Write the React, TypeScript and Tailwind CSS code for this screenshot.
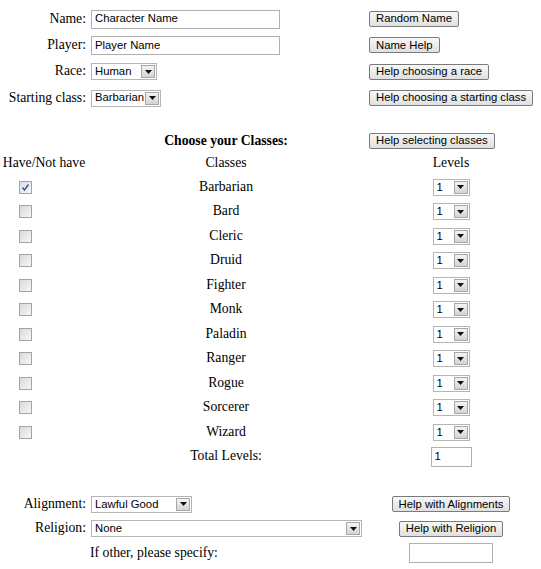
import React from "react";

const serif = "font-['Liberation_Serif','Times_New_Roman',serif] text-[13.7px] text-black";
const sans = "font-['Liberation_Sans',Arial,sans-serif] text-[11.3px] text-black";

function Arrow() {
  return (
    <div className="flex h-[13px] w-[14px] shrink-0 items-center justify-center border border-[#a7a7a7] bg-gradient-to-b from-[#f4f4f4] to-[#d4d4d4] mr-[1px]">
      <svg width="7" height="4" viewBox="0 0 7 4">
        <path d="M0 0 L7 0 L3.5 4 Z" fill="#111" />
      </svg>
    </div>
  );
}

function Select({ value, w }: { value: string; w: string }) {
  return (
    <div className={`flex h-[17px] items-center justify-between border border-[#b5b5b5] bg-white ${w}`}>
      <span className={`${sans} pl-[3px] leading-none whitespace-nowrap`}>{value}</span>
      <Arrow />
    </div>
  );
}

function Button({ children }: { children: React.ReactNode }) {
  return (
    <div className={`${sans} flex h-[16px] items-center rounded-[2px] border border-[#7a7a7a] bg-gradient-to-b from-[#f8f8f8] to-[#e0e0e0] px-[6px] leading-none whitespace-nowrap`}>
      {children}
    </div>
  );
}

function TextBox({ value, w, h }: { value: string; w: string; h: string }) {
  return (
    <div className={`flex items-center border border-[#b0b0b0] bg-white ${w} ${h}`}>
      <span className={`${sans} pl-[3px] leading-none`}>{value}</span>
    </div>
  );
}

function Check({ checked }: { checked?: boolean }) {
  return (
    <div
      className={`flex h-[13px] w-[13px] items-center justify-center border border-[#a3a3a3] ${
        checked ? "bg-gradient-to-br from-[#d8dfe9] to-[#f4f6fa]" : "bg-gradient-to-br from-[#d9d9d9] to-[#f7f7f7]"
      }`}
    >
      {checked && (
        <svg width="9" height="9" viewBox="0 0 9 9">
          <path d="M1.5 4.5 L3.5 7 L7.5 1.5" stroke="#4c5c7a" strokeWidth="1.5" fill="none" />
        </svg>
      )}
    </div>
  );
}

const classes = ["Barbarian", "Bard", "Cleric", "Druid", "Fighter", "Monk", "Paladin", "Ranger", "Rogue", "Sorcerer", "Wizard"];

export default function App() {
  const grid = "grid grid-cols-[88px_276px_174px]";
  return (
    <div className="h-[569px] w-[541px] overflow-hidden bg-white pt-[6px]">
      {[
        { label: "Name:", ctrl: <TextBox value="Character Name" w="w-[189px]" h="h-[19px]" />, btn: "Random Name" },
        { label: "Player:", ctrl: <TextBox value="Player Name" w="w-[189px]" h="h-[19px]" />, btn: "Name Help" },
        { label: "Race:", ctrl: <Select value="Human" w="w-[66px]" />, btn: "Help choosing a race" },
        { label: "Starting class:", ctrl: <Select value="Barbarian" w="w-[70px]" />, btn: "Help choosing a starting class" },
      ].map((r) => (
        <div key={r.label} className={`${grid} h-[26.3px]`}>
          <div className={`${serif} flex items-center justify-end pr-[2px] whitespace-nowrap`}>{r.label}</div>
          <div className="flex items-center pl-[3px]">{r.ctrl}</div>
          <div className="flex items-center pl-[5px]">
            <Button>{r.btn}</Button>
          </div>
        </div>
      ))}

      <div className="h-[18.8px]" />

      <div className={`${grid} h-[22px]`}>
        <div />
        <div className={`${serif} flex items-center justify-center font-bold`}>Choose your Classes:</div>
        <div className="flex items-center pl-[5px]">
          <Button>Help selecting classes</Button>
        </div>
      </div>

      <div className={`${grid} h-[23px]`}>
        <div className={`${serif} flex items-center justify-center whitespace-nowrap`}>Have/Not have</div>
        <div className={`${serif} flex items-center justify-center`}>Classes</div>
        <div className={`${serif} flex items-center justify-center`}>Levels</div>
      </div>

      {classes.map((c, i) => (
        <div key={c} className={`${grid} h-[24.5px]`}>
          <div className="flex items-center pl-[19px]">
            <Check checked={i === 0} />
          </div>
          <div className={`${serif} flex items-center justify-center`}>{c}</div>
          <div className="flex items-center justify-center">
            <Select value="1" w="w-[37px]" />
          </div>
        </div>
      ))}

      <div className={`${grid} h-[24.5px]`}>
        <div />
        <div className={`${serif} flex items-center justify-center`}>Total Levels:</div>
        <div className="flex items-center justify-center">
          <TextBox value="1" w="w-[41px]" h="h-[20px]" />
        </div>
      </div>

      <div className="h-[23px]" />

      <div className={`${grid} h-[24.5px]`}>
        <div className={`${serif} flex items-center justify-end pr-[2px]`}>Alignment:</div>
        <div className="flex items-center pl-[3px]">
          <Select value="Lawful Good" w="w-[101px]" />
        </div>
        <div className="flex items-center justify-center">
          <Button>Help with Alignments</Button>
        </div>
      </div>

      <div className={`${grid} h-[24.5px]`}>
        <div className={`${serif} flex items-center justify-end pr-[2px]`}>Religion:</div>
        <div className="flex items-center pl-[3px]">
          <Select value="None" w="w-[271px]" />
        </div>
        <div className="flex items-center justify-center">
          <Button>Help with Religion</Button>
        </div>
      </div>

      <div className={`${grid} h-[24.5px]`}>
        <div />
        <div className={`${serif} flex items-center pl-[2px]`}>If other, please specify:</div>
        <div className="flex items-center justify-center">
          <TextBox value="" w="w-[84px]" h="h-[20px]" />
        </div>
      </div>
    </div>
  );
}
